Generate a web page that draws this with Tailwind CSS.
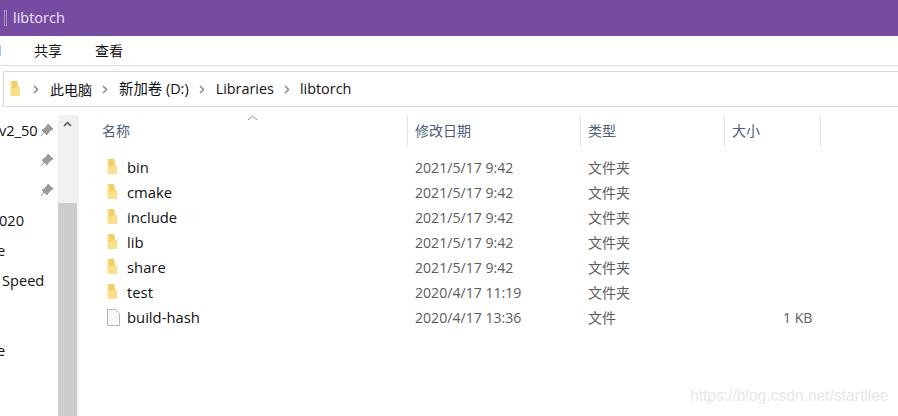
<!DOCTYPE html>
<html lang="zh-CN">
<head>
    <meta charset="UTF-8">
    <title>libtorch</title>
    <script src="https://cdn.jsdelivr.net/npm/@tailwindcss/browser@4"></script>
</head>
<body class="w-[898px] h-[416px] overflow-hidden bg-white flex flex-col text-[14px] text-[#111] font-['Open_Sans','Noto_Sans_CJK_SC',sans-serif]">

    <!-- title bar -->
    <div class="h-[36px] bg-[#764ba2] flex items-center pl-[4px] shrink-0">
        <div class="w-[3px] h-[16px] border border-[#a98fc6] mr-[6px]"></div>
        <span class="text-[14.5px] text-[#ece6f3]">libtorch</span>
    </div>

    <!-- ribbon tabs -->
    <div class="h-[30px] border-b border-[#dadada] flex items-center shrink-0 relative">
        <div class="absolute left-0 top-[9px] h-[11px] w-px bg-[#9cc8ea]"></div>
        <span class="ml-[34px] w-[61px]">共享</span>
        <span>查看</span>
    </div>

    <!-- address bar -->
    <div class="h-[36px] mt-[5px] ml-[3px] border border-[#d9d9d9] border-r-0 flex items-center shrink-0 text-[14.4px]">
        <svg class="ml-[5px] w-[12px] h-[17px]" viewBox="0 0 12 17"><path d="M1 0h7l1 6h2v9H1z" fill="#fbe08c"/><path d="M3 0h5l1 6-6 2z" fill="#f4cf68"/><path d="M1 1h1v14H1z" fill="#fff0c4"/></svg>
        <svg class="ml-[12px] w-[6px] h-[9px]" viewBox="0 0 6 9"><path d="M1 1l3.500 3.500L1 8" fill="none" stroke="#8a8a8a" stroke-width="1.500"/></svg>
        <span class="ml-[11px] text-[14px]">此电脑</span>
        <svg class="ml-[10px] w-[6px] h-[9px]" viewBox="0 0 6 9"><path d="M1 1l3.500 3.500L1 8" fill="none" stroke="#8a8a8a" stroke-width="1.500"/></svg>
        <span class="ml-[11px]">新加卷 (D:)</span>
        <svg class="ml-[10px] w-[6px] h-[9px]" viewBox="0 0 6 9"><path d="M1 1l3.500 3.500L1 8" fill="none" stroke="#8a8a8a" stroke-width="1.500"/></svg>
        <span class="ml-[11px]">Libraries</span>
        <svg class="ml-[10px] w-[6px] h-[9px]" viewBox="0 0 6 9"><path d="M1 1l3.500 3.500L1 8" fill="none" stroke="#8a8a8a" stroke-width="1.500"/></svg>
        <span class="ml-[10px]">libtorch</span>
    </div>

    <div class="flex flex-1 min-h-0 mt-[8px]">
        <!-- nav pane -->
        <div class="w-[58px] shrink-0 overflow-hidden whitespace-nowrap text-[14.6px]">
            <div class="h-[30px] flex items-center relative">
                <span class="ml-[-1px] pt-[2px]">v2_50</span>
                <svg class="absolute left-[40px] top-[8px] w-[14px] h-[14px]" viewBox="0 0 14 14"><path d="M8 1l5 5-2 1-3 3-1 2-5-5 2-1 3-3zM4 9l-3 4" fill="#9a9a9a" stroke="#9a9a9a" stroke-width="1"/></svg>
            </div>
            <div class="h-[30px] relative">
                <svg class="absolute left-[40px] top-[8px] w-[14px] h-[14px]" viewBox="0 0 14 14"><path d="M8 1l5 5-2 1-3 3-1 2-5-5 2-1 3-3zM4 9l-3 4" fill="#9a9a9a" stroke="#9a9a9a" stroke-width="1"/></svg>
            </div>
            <div class="h-[30px] relative">
                <svg class="absolute left-[40px] top-[8px] w-[14px] h-[14px]" viewBox="0 0 14 14"><path d="M8 1l5 5-2 1-3 3-1 2-5-5 2-1 3-3zM4 9l-3 4" fill="#9a9a9a" stroke="#9a9a9a" stroke-width="1"/></svg>
            </div>
            <div class="h-[30px] flex items-center"><span class="ml-[-1px] pt-[2px]">020</span></div>
            <div class="h-[30px] flex items-center"><span class="ml-[-3px] pt-[2px]">e</span></div>
            <div class="h-[30px] flex items-center"><span class="ml-[2px] pt-[2px]">Speed</span></div>
            <div class="h-[40px]"></div>
            <div class="h-[30px] flex items-center"><span class="ml-[-3px] pt-[2px]">e</span></div>
        </div>

        <!-- scrollbar -->
        <div class="w-[19px] shrink-0 flex flex-col bg-[#f0f0f0]">
            <div class="h-[88px] pt-[3px] flex justify-center">
                <svg class="w-[9px] h-[6px] mt-[3px]" viewBox="0 0 9 6"><path d="M1 5l3.500-3.500L8 5" fill="none" stroke="#505050" stroke-width="1.500"/></svg>
            </div>
            <div class="flex-1 bg-[#cdcdcd]"></div>
        </div>
        <div class="w-[2px] shrink-0 bg-[#f3f3f3]"></div>

        <!-- file list -->
        <div class="flex-1 relative">
            <svg class="absolute left-[168px] top-[0px] w-[11px] h-[6px]" viewBox="0 0 11 6"><path d="M1 5l4.500-4L10 5" fill="none" stroke="#8a8a8a"/></svg>
            <div class="h-[32px] flex items-center text-[#4c607a]">
                <span class="w-[329px] border-r border-[#e5e5e5] h-[32px] leading-[32px] pl-[23px] mr-[7px] shrink-0">名称</span>
                <span class="w-[166px] border-r border-[#e5e5e5] h-[32px] leading-[32px] mr-[7px] shrink-0">修改日期</span>
                <span class="w-[137px] border-r border-[#e5e5e5] h-[32px] leading-[32px] mr-[7px] shrink-0">类型</span>
                <span class="w-[89px] border-r border-[#e5e5e5] h-[32px] leading-[32px] shrink-0">大小</span>
            </div>
            <div class="mt-[8px] flex flex-col">
                <div class="h-[25px] flex items-center">
                    <svg class="ml-[27px] w-[12px] h-[17px] shrink-0" viewBox="0 0 12 17"><path d="M1 0h7l1 6h2v9H1z" fill="#fbe08c"/><path d="M3 0h5l1 6-6 2z" fill="#f4cf68"/><path d="M1 1h1v14H1z" fill="#fff0c4"/></svg>
                    <span class="ml-[9px] w-[288px] shrink-0 text-[14.8px]">bin</span>
                    <span class="w-[173px] shrink-0 text-[14.1px] text-[#5c5c5c]">2021/5/17 9:42</span>
                    <span class="text-[#5c5c5c]">文件夹</span>
                </div>
                <div class="h-[25px] flex items-center">
                    <svg class="ml-[27px] w-[12px] h-[17px] shrink-0" viewBox="0 0 12 17"><path d="M1 0h7l1 6h2v9H1z" fill="#fbe08c"/><path d="M3 0h5l1 6-6 2z" fill="#f4cf68"/><path d="M1 1h1v14H1z" fill="#fff0c4"/></svg>
                    <span class="ml-[9px] w-[288px] shrink-0 text-[14.8px]">cmake</span>
                    <span class="w-[173px] shrink-0 text-[14.1px] text-[#5c5c5c]">2021/5/17 9:42</span>
                    <span class="text-[#5c5c5c]">文件夹</span>
                </div>
                <div class="h-[25px] flex items-center">
                    <svg class="ml-[27px] w-[12px] h-[17px] shrink-0" viewBox="0 0 12 17"><path d="M1 0h7l1 6h2v9H1z" fill="#fbe08c"/><path d="M3 0h5l1 6-6 2z" fill="#f4cf68"/><path d="M1 1h1v14H1z" fill="#fff0c4"/></svg>
                    <span class="ml-[9px] w-[288px] shrink-0 text-[14.8px]">include</span>
                    <span class="w-[173px] shrink-0 text-[14.1px] text-[#5c5c5c]">2021/5/17 9:42</span>
                    <span class="text-[#5c5c5c]">文件夹</span>
                </div>
                <div class="h-[25px] flex items-center">
                    <svg class="ml-[27px] w-[12px] h-[17px] shrink-0" viewBox="0 0 12 17"><path d="M1 0h7l1 6h2v9H1z" fill="#fbe08c"/><path d="M3 0h5l1 6-6 2z" fill="#f4cf68"/><path d="M1 1h1v14H1z" fill="#fff0c4"/></svg>
                    <span class="ml-[9px] w-[288px] shrink-0 text-[14.8px]">lib</span>
                    <span class="w-[173px] shrink-0 text-[14.1px] text-[#5c5c5c]">2021/5/17 9:42</span>
                    <span class="text-[#5c5c5c]">文件夹</span>
                </div>
                <div class="h-[25px] flex items-center">
                    <svg class="ml-[27px] w-[12px] h-[17px] shrink-0" viewBox="0 0 12 17"><path d="M1 0h7l1 6h2v9H1z" fill="#fbe08c"/><path d="M3 0h5l1 6-6 2z" fill="#f4cf68"/><path d="M1 1h1v14H1z" fill="#fff0c4"/></svg>
                    <span class="ml-[9px] w-[288px] shrink-0 text-[14.8px]">share</span>
                    <span class="w-[173px] shrink-0 text-[14.1px] text-[#5c5c5c]">2021/5/17 9:42</span>
                    <span class="text-[#5c5c5c]">文件夹</span>
                </div>
                <div class="h-[25px] flex items-center">
                    <svg class="ml-[27px] w-[12px] h-[17px] shrink-0" viewBox="0 0 12 17"><path d="M1 0h7l1 6h2v9H1z" fill="#fbe08c"/><path d="M3 0h5l1 6-6 2z" fill="#f4cf68"/><path d="M1 1h1v14H1z" fill="#fff0c4"/></svg>
                    <span class="ml-[9px] w-[288px] shrink-0 text-[14.8px]">test</span>
                    <span class="w-[173px] shrink-0 text-[14.1px] text-[#5c5c5c]">2020/4/17 11:19</span>
                    <span class="text-[#5c5c5c]">文件夹</span>
                </div>
                <div class="h-[25px] flex items-center">
                    <svg class="ml-[28px] w-[13px] h-[17px] shrink-0" viewBox="0 0 13 17"><path d="M.5.500h8l4 4v12H.5z" fill="#fafafa" stroke="#b5b5b5"/></svg>
                    <span class="ml-[7px] w-[288px] shrink-0 text-[14.8px]">build-hash</span>
                    <span class="w-[173px] shrink-0 text-[14.1px] text-[#5c5c5c]">2020/4/17 13:36</span>
                    <span class="w-[195px] shrink-0 text-[#5c5c5c]">文件</span>
                    <span class="text-[#5c5c5c]">1 KB</span>
                </div>
            </div>
            <!-- watermark -->
            <div class="absolute left-[611px] bottom-[9px] font-['Liberation_Sans',sans-serif] text-[15.6px] text-[#e8e8e8]">https://blog.csdn.net/startllee</div>
        </div>
    </div>
</body>
</html>
